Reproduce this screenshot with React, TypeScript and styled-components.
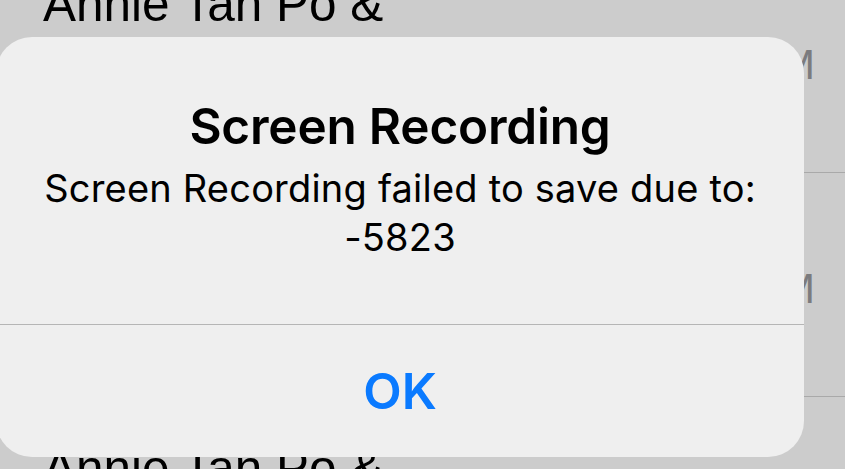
import React from "react";
import styled, { createGlobalStyle } from "styled-components";

const Global = createGlobalStyle`
  html, body { margin: 0; padding: 0; }
  body {
    width: 845px;
    height: 469px;
    overflow: hidden;
    background: #cccccc;
    font-family: "Liberation Sans", Arial, sans-serif;
  }
`;

const Page = styled.div`
  position: relative;
  width: 845px;
  height: 469px;
  overflow: hidden;
  background: #cccccc;
`;

const List = styled.div`
  display: flex;
  flex-direction: column;
  margin-top: -51px;
`;

const Row = styled.div`
  display: flex;
  justify-content: space-between;
  align-items: flex-start;
  height: 224px;
  box-sizing: border-box;
  padding: 0 30px 0 43px;
  border-bottom: 1px solid #a9a9a9;
  flex-shrink: 0;
`;

const Name = styled.div<{ $top: number }>`
  margin-top: ${(p) => p.$top}px;
  font-size: 49.5px;
  line-height: 56px;
  color: #000;
  white-space: nowrap;
`;

const Time = styled.div`
  margin-top: 90px;
  font-size: 43px;
  line-height: 50px;
  color: #7b7b7e;
  white-space: nowrap;
`;

const Alert = styled.div`
  position: absolute;
  left: -4px;
  top: 37px;
  width: 808px;
  height: 420px;
  border-radius: 36px;
  background: #efefef;
  display: flex;
  flex-direction: column;
  overflow: hidden;
  font-family: Inter, "Liberation Sans", sans-serif;
`;

const Content = styled.div`
  height: 288px;
  box-sizing: border-box;
  padding-top: 59px;
  display: flex;
  flex-direction: column;
  align-items: center;
  text-align: center;
  border-bottom: 1px solid #b5b5b5;
`;

const Title = styled.div`
  font-size: 49.5px;
  line-height: 60px;
  font-weight: 600;
  color: #000;
  letter-spacing: -0.2px;
`;

const Message = styled.div`
  margin-top: 8px;
  font-size: 38px;
  line-height: 49px;
  font-weight: 400;
  color: #000;
  letter-spacing: 0.2px;
`;

const Button = styled.div`
  flex: 1;
  display: flex;
  align-items: center;
  justify-content: center;
  font-size: 50px;
  font-weight: 600;
  color: #0a7aff;
`;

export default function App() {
  return (
    <Page>
      <Global />
      <List>
        <Row>
          <Name $top={27}>Annie Tan Po &amp;</Name>
          <Time>AM</Time>
        </Row>
        <Row>
          <Name $top={27}>Annie Tan Po &amp;</Name>
          <Time>PM</Time>
        </Row>
        <Row>
          <Name $top={43}>Annie Tan Po &amp;</Name>
          <Time>PM</Time>
        </Row>
      </List>
      <Alert role="alertdialog">
        <Content>
          <Title>Screen Recording</Title>
          <Message>
            Screen Recording failed to save due to:
            <br />
            -5823
          </Message>
        </Content>
        <Button>OK</Button>
      </Alert>
    </Page>
  );
}
